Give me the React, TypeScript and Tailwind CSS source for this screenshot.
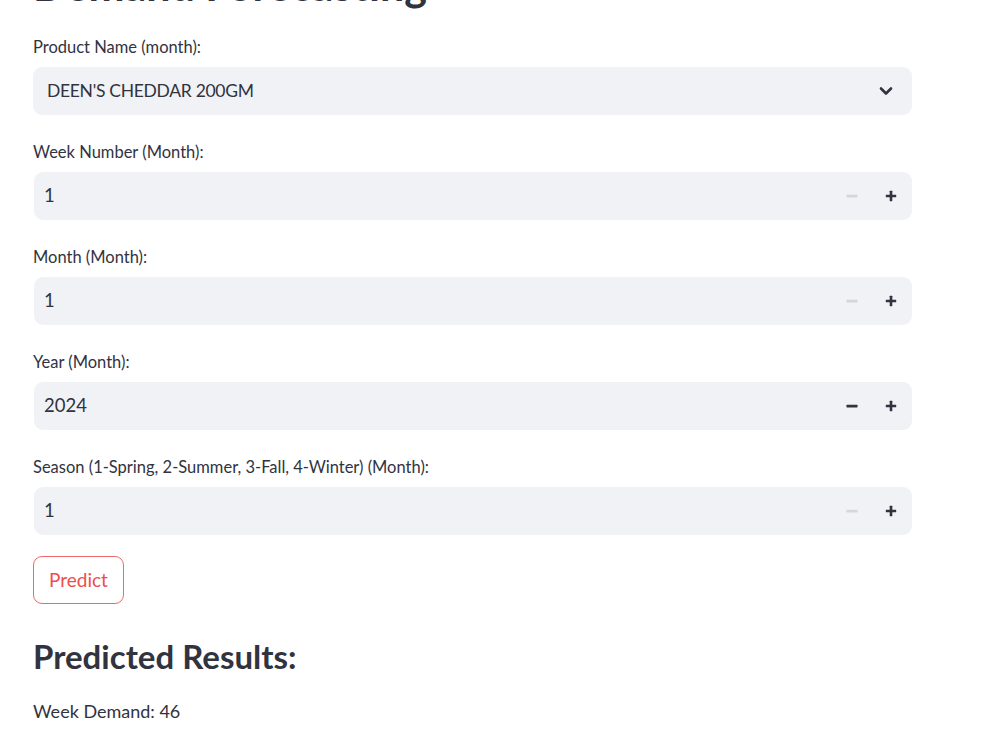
import React from "react";

const Minus = ({ disabled }: { disabled: boolean }) => (
  <svg width="12" height="12" viewBox="0 0 12 12">
    <rect x="0.5" y="4.8" width="11" height="2.6" rx="0.4" fill={disabled ? "#d5d6db" : "#31333f"} />
  </svg>
);

const Plus = () => (
  <svg width="12" height="12" viewBox="0 0 12 12">
    <rect x="0.8" y="4.7" width="10.4" height="2.6" rx="0.4" fill="#31333f" />
    <rect x="4.7" y="0.8" width="2.6" height="10.4" rx="0.4" fill="#31333f" />
  </svg>
);

const Chevron = () => (
  <svg width="16" height="16" viewBox="0 0 16 16" fill="none">
    <path d="M3 5.5 L8 10.5 L13 5.5" stroke="#31333f" strokeWidth="2.6" strokeLinecap="round" strokeLinejoin="round" />
  </svg>
);

function Label({ children }: { children: React.ReactNode }) {
  return (
    <div className="h-[20px] leading-[20px] text-[16.5px] text-[#31333f] mb-[10px]">{children}</div>
  );
}

function NumberField({ label, value, minusDisabled }: { label: string; value: string; minusDisabled: boolean }) {
  return (
    <div className="flex flex-col mt-[27px]">
      <Label>{label}</Label>
      <div className="ml-px flex h-[48px] items-center rounded-[9px] bg-[#f0f2f6]">
        <div className="flex-1 pl-[10px] text-[18.5px] text-[#31333f]">{value}</div>
        <div className="flex h-full w-[39px] items-center justify-center">
          <Minus disabled={minusDisabled} />
        </div>
        <div className="flex h-full w-[39px] items-center justify-center mr-[2px]">
          <Plus />
        </div>
      </div>
    </div>
  );
}

export default function App() {
  return (
    <div className="min-h-[750px] w-full bg-white font-['Lato',sans-serif] text-[#31333f]">
      <div className="w-[879px] ml-[33px] flex flex-col">
        <div className="mt-[-45px] h-[60px] leading-[60px] text-[43px] font-bold whitespace-nowrap">
          Demand Forecasting
        </div>
        <div className="flex flex-col mt-[22px]">
          <Label>Product Name (month):</Label>
          <div className="flex h-[48px] items-center rounded-[9px] bg-[#f0f2f6] pl-[14px] pr-[18px]">
            <div className="flex-1 text-[17.5px] tracking-[-0.3px] text-[#31333f]">DEEN'S CHEDDAR 200GM</div>
            <Chevron />
          </div>
        </div>
        <NumberField label="Week Number (Month):" value="1" minusDisabled />
        <NumberField label="Month (Month):" value="1" minusDisabled />
        <NumberField label="Year (Month):" value="2024" minusDisabled={false} />
        <NumberField label="Season (1-Spring, 2-Summer, 3-Fall, 4-Winter) (Month):" value="1" minusDisabled />
        <div className="mt-[21px]">
          <button className="h-[48px] w-[91px] rounded-[9px] border border-[#ec6a6a] bg-white text-[19px] text-[#ef4d4d]">
            Predict
          </button>
        </div>
        <div className="mt-[32px] h-[40px] leading-[40px] text-[33px] font-bold">Predicted Results:</div>
        <div className="mt-[21px] h-[28px] leading-[28px] text-[18px]">Week Demand: 46</div>
      </div>
    </div>
  );
}
